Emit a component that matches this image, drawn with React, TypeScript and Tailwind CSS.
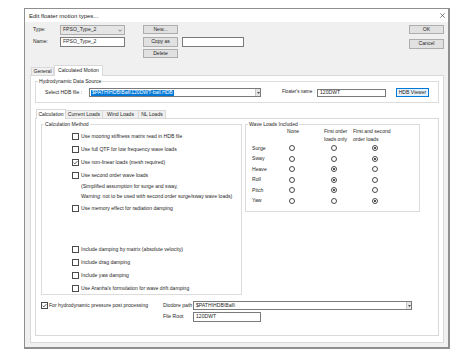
import React from "react";

function Check({ checked = false }: { checked?: boolean }) {
  return (
    <span className="w-[7px] h-[7px] border border-[#4a4a4a] bg-white flex items-center justify-center shrink-0">
      {checked && (
        <svg width="5" height="5" viewBox="0 0 5 5">
          <path d="M0.6 2.6 L1.9 3.9 L4.4 1.1" stroke="#333" strokeWidth="0.8" fill="none" />
        </svg>
      )}
    </span>
  );
}

function Radio({ on = false }: { on?: boolean }) {
  return (
    <span className="w-[6px] h-[6px] rounded-full border border-[#4a4a4a] bg-white flex items-center justify-center shrink-0">
      {on && <span className="w-[2px] h-[2px] rounded-full bg-[#1e1e1e]" />}
    </span>
  );
}

function Btn({ children, cls }: { children: React.ReactNode; cls: string }) {
  return (
    <div className={"border border-[#adadad] bg-[#e1e1e1] flex items-center justify-center " + cls}>
      {children}
    </div>
  );
}

function DropBtn() {
  return (
    <span className="w-[5px] h-full border-l border-[#c8c8c8] bg-[#e6e6e6] flex items-center justify-center shrink-0">
      <svg width="3" height="2" viewBox="0 0 3 2">
        <path d="M0 0 L3 0 L1.5 2 Z" fill="#555" />
      </svg>
    </span>
  );
}

function Row({ checked, text }: { checked?: boolean; text: string }) {
  return (
    <div className="h-[13px] flex items-center gap-[2px]">
      <Check checked={checked} />
      <span>{text}</span>
    </div>
  );
}

const waveRows: [string, number][] = [
  ["Surge", 2],
  ["Sway", 2],
  ["Heave", 1],
  ["Roll", 1],
  ["Pitch", 1],
  ["Yaw", 2],
];

export default function App() {
  return (
    <div className="w-[474px] h-[355px] bg-white font-['Liberation_Sans',Arial,sans-serif] text-[5.1px] leading-none text-[#1e1e1e] whitespace-nowrap overflow-hidden pt-[8px] pl-[24px]">
      <div className="w-[426px] h-[341px] border border-[#8f8f8f] border-r-[2px] border-b-[2px] bg-[#f0f0f0] flex flex-col">
        {/* title bar */}
        <div className="h-[13px] shrink-0 bg-white flex items-center justify-between pl-[4px] pr-[3px]">
          <span className="text-[6px]">Edit floater motion types...</span>
          <svg width="5" height="5" viewBox="0 0 5 5">
            <path d="M0.3 0.3 L4.7 4.7 M4.7 0.3 L0.3 4.7" stroke="#333" strokeWidth="0.6" />
          </svg>
        </div>

        {/* top controls */}
        <div className="h-[43px] shrink-0 flex items-start pt-[3px]">
          <div className="ml-[8px] w-[27px] flex flex-col">
            <div className="h-[10px] flex items-center">Type:</div>
            <div className="h-[10px] mt-[2px] flex items-center">Name:</div>
          </div>
          <div className="w-[65px] flex flex-col">
            <div className="h-[10px] border border-[#adadad] bg-[#e5e5e5] flex items-center justify-between pl-[2px] pr-[2px]">
              <span>FPSO_Type_2</span>
              <svg width="4" height="3" viewBox="0 0 4 3">
                <path d="M0.3 0.6 L2 2.3 L3.7 0.6" stroke="#444" strokeWidth="0.6" fill="none" />
              </svg>
            </div>
            <div className="h-[10px] mt-[2px] border border-[#7a7a7a] bg-white flex items-center pl-[2px]">
              FPSO_Type_2
            </div>
          </div>
          <div className="ml-[18px] w-[35px] flex flex-col">
            <Btn cls="h-[9px]">New...</Btn>
            <Btn cls="h-[10px] mt-[3px]">Copy as</Btn>
            <Btn cls="h-[9px] mt-[2px]">Delete</Btn>
          </div>
          <div className="ml-[4px] mt-[12px] w-[62px] h-[10px] border border-[#7a7a7a] bg-white" />
          <div className="flex-1" />
          <div className="w-[35px] mr-[4px] flex flex-col">
            <Btn cls="h-[9px]">OK</Btn>
            <Btn cls="h-[10px] mt-[5px]">Cancel</Btn>
          </div>
        </div>

        {/* outer tabs */}
        <div className="h-[10px] shrink-0 ml-[5px] flex items-end pl-[1px]">
          <div className="w-[23px] h-[8px] border border-b-0 border-[#d9d9d9] bg-[#f0f0f0] flex items-center justify-center">
            General
          </div>
          <div className="relative z-10 w-[49px] h-[11px] -mb-[1px] border border-b-0 border-[#d9d9d9] bg-white flex items-center justify-center">
            Calculated Motion
          </div>
        </div>

        {/* outer panel */}
        <div className="ml-[5px] w-[414px] h-[268px] shrink-0 border border-[#d9d9d9] bg-white flex flex-col">
          <fieldset className="ml-[4px] mt-[1px] w-[404px] h-[26px] border border-[#dcdcdc]">
            <legend className="ml-[2px] px-[1px] leading-[8px]">Hydrodynamic Data Source</legend>
            <div className="mt-[3px] h-[9px] flex items-center">
              <span className="ml-[9px] w-[44px]">Select HDB file :</span>
              <div className="w-[172px] h-[9px] border border-[#7a7a7a] bg-white flex items-center justify-between pl-[1px]">
                <span className="bg-[#0078d7] text-white h-[6px] flex items-center px-[1px]">
                  $PATH\HDB\Ball\120DWT-ball.HDB
                </span>
                <DropBtn />
              </div>
              <span className="ml-[21px] w-[35px] text-[4.6px]">Floater's name :</span>
              <div className="w-[69px] h-[8px] border border-[#7a7a7a] bg-white flex items-center pl-[2px]">
                120DWT
              </div>
              <div className="ml-[10px] w-[33px] h-[9px] border border-[#0078d7] bg-[#e5f1fb] flex items-center justify-center">
                HDB Viewer
              </div>
            </div>
          </fieldset>

          {/* inner tabs */}
          <div className="mt-[6px] ml-[4px] h-[9px] shrink-0 flex items-end pl-[1px]">
            <div className="relative z-10 w-[30px] h-[10px] -mb-[1px] border border-b-0 border-[#d9d9d9] bg-white flex items-center justify-center">
              Calculation
            </div>
            <div className="w-[37px] h-[8px] border border-b-0 border-l-0 border-[#d9d9d9] bg-[#f0f0f0] flex items-center justify-center">
              Current Loads
            </div>
            <div className="w-[36px] h-[8px] border border-b-0 border-l-0 border-[#d9d9d9] bg-[#f0f0f0] flex items-center justify-center">
              Wind Loads
            </div>
            <div className="w-[27px] h-[8px] border border-b-0 border-l-0 border-[#d9d9d9] bg-[#f0f0f0] flex items-center justify-center">
              NL Loads
            </div>
          </div>

          {/* inner panel */}
          <div className="ml-[4px] w-[404px] h-[218px] shrink-0 border border-[#d9d9d9] bg-white flex flex-col">
            <div className="mt-[1px] flex items-start">
              <fieldset className="ml-[5px] w-[201px] h-[175px] border border-[#dcdcdc]">
                <legend className="ml-[2px] px-[1px] leading-[8px]">Calculation Method</legend>
                <div className="pl-[30px] pt-[2px] flex flex-col">
                  <Row text="Use mooring stiffness matrix read in HDB file" />
                  <Row text="Use full QTF for low frequency wave loads" />
                  <Row checked text="Use non-linear loads (mesh required)" />
                  <Row text="Use second order wave loads" />
                  <div className="h-[10px] flex items-center ml-[9px]">
                    (Simplified assumption for surge and sway,
                  </div>
                  <div className="h-[10px] flex items-center ml-[9px]">
                    Warning: not to be used with second order surge/sway wave loads)
                  </div>
                  <Row text="Use memory effect for radiation damping" />
                  <div className="h-[28px]" />
                  <Row text="Include damping by matrix (absolute velocity)" />
                  <Row text="Include drag damping" />
                  <Row text="Include yaw damping" />
                  <Row text="Use Aranha's formulation for wave drift damping" />
                </div>
              </fieldset>

              <fieldset className="ml-[3px] w-[175px] h-[92px] border border-[#dcdcdc]">
                <legend className="ml-[2px] px-[1px] leading-[8px]">Wave Loads Included</legend>
                <div className="-mt-[1px] pl-[6px] grid grid-cols-[35px_37px_29px_1fr]">
                  <div />
                  <div className="leading-[8px]">None</div>
                  <div className="leading-[8px]">
                    First order
                    <br />
                    loads only
                  </div>
                  <div className="leading-[8px]">
                    First and second
                    <br />
                    order loads
                  </div>
                  {waveRows.map(([name, sel]) => (
                    <React.Fragment key={name}>
                      <div className="h-[10.5px] flex items-center">{name}</div>
                      <div className="h-[10.5px] flex items-center pl-[2px]">
                        <Radio on={sel === 0} />
                      </div>
                      <div className="h-[10.5px] flex items-center pl-[7px]">
                        <Radio on={sel === 1} />
                      </div>
                      <div className="h-[10.5px] flex items-center pl-[19px]">
                        <Radio on={sel === 2} />
                      </div>
                    </React.Fragment>
                  ))}
                </div>
              </fieldset>
            </div>

            {/* bottom row */}
            <div className="mt-[6px] flex items-start">
              <div className="ml-[5px] w-[122px] h-[9px] flex items-center gap-[1px]">
                <Check checked />
                <span>For hydrodynamic pressure post processing</span>
              </div>
              <div className="flex flex-col">
                <div className="h-[9px] flex items-center">
                  <span className="w-[30px]">Diodore path</span>
                  <div className="w-[219px] h-[9px] border border-[#7a7a7a] bg-white flex items-center justify-between pl-[2px]">
                    <span>$PATH\HDB\Ball\</span>
                    <DropBtn />
                  </div>
                </div>
                <div className="mt-[2px] h-[10px] flex items-center">
                  <span className="w-[30px]">File Root</span>
                  <div className="w-[68px] h-[10px] border border-[#7a7a7a] bg-white flex items-center pl-[2px]">
                    120DWT
                  </div>
                </div>
              </div>
            </div>
          </div>
        </div>
      </div>
    </div>
  );
}
